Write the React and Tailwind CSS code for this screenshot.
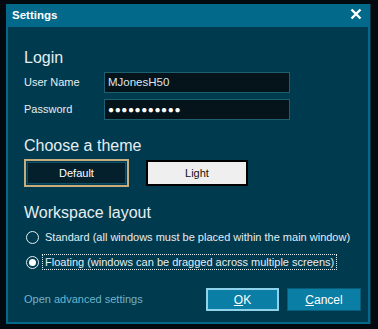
import React from "react";

export default function App() {
  return (
    <div className="w-[378px] h-[329px] bg-[#020a0f] pt-[4px] pl-[6px]" style={{ fontFamily: '"Liberation Sans", Arial, sans-serif' }}>
      <div className="w-[365px] h-[320px] flex flex-col bg-[#03698a] border-r border-[#0b3344]">
        {/* Title bar */}
        <div className="h-[23px] flex items-center justify-between pl-[6px] pr-[8px]">
          <span className="text-white font-bold text-[11.5px]">Settings</span>
          <svg width="12" height="12" viewBox="0 0 12 12" className="mt-[-4px]">
            <path d="M1.5 1.5 L10.5 10.5 M10.5 1.5 L1.5 10.5" stroke="white" strokeWidth="2.4" />
          </svg>
        </div>
        {/* Body */}
        <div className="flex-1 mx-[2px] mb-[2px] bg-[#003a4f] flex flex-col px-[16px] text-[#e6eef1] text-[11px] whitespace-nowrap">
          <div className="text-[16px] leading-[20px] mt-[21px]">Login</div>
          <div className="flex items-center mt-[4px]">
            <span className="w-[80px]">User Name</span>
            <div className="w-[186px] h-[21px] bg-[#05131b] border border-[#1d6072] flex items-center px-[3px] text-[11.5px] text-[#dfe6ea]">MJonesH50</div>
          </div>
          <div className="flex items-center mt-[6px]">
            <span className="w-[80px]">Password</span>
            <div className="w-[186px] h-[21px] bg-[#05131b] border border-[#1d6072] flex items-center px-[3px] text-[10px] text-white tracking-[0.6px]">●●●●●●●●●●●</div>
          </div>
          <div className="text-[16px] leading-[20px] mt-[16px]">Choose a theme</div>
          <div className="flex items-center mt-[3px]">
            <div className="w-[105px] h-[28px] border-2 border-[#c9ac7c] p-[1px] flex">
              <div className="flex-1 bg-[#03202c] border border-[#0f5066] flex items-center justify-center text-white">Default</div>
            </div>
            <div className="ml-[17px] w-[102px] h-[26px] border-2 border-[#000000] bg-[#efefef] flex items-center justify-center text-[#111]">Light</div>
          </div>
          <div className="text-[16px] leading-[20px] mt-[16px]">Workspace layout</div>
          <div className="flex items-center mt-[6px] h-[16px]">
            <div className="w-[13px] h-[13px] rounded-full border border-[#e6eef1] ml-[2px]" />
            <span className="ml-[6px]">Standard (all windows must be placed within the main window)</span>
          </div>
          <div className="flex items-center mt-[9px] h-[16px]">
            <div className="w-[13px] h-[13px] rounded-full border border-[#e6eef1] ml-[2px] flex items-center justify-center">
              <div className="w-[7px] h-[7px] rounded-full bg-white" />
            </div>
            <span className="ml-[3px] border border-dotted border-[#e6eef1] px-[2px] leading-[14px]">Floating (windows can be dragged across multiple screens)</span>
          </div>
          <div className="flex items-center mt-[18px]">
            <span className="text-[#6fb3ca]">Open advanced settings</span>
            <div className="ml-auto flex gap-[8px] mr-[-9px]">
              <div className="w-[73px] h-[23px] bg-[#0a7ea4] border-2 border-[#8fd2ea] flex items-center justify-center text-[12px] text-white"><span><u>O</u>K</span></div>
              <div className="w-[74px] h-[23px] bg-[#0a7ea4] border border-[#0a5d7a] flex items-center justify-center text-[12px] text-white"><span><u>C</u>ancel</span></div>
            </div>
          </div>
        </div>
      </div>
    </div>
  );
}
